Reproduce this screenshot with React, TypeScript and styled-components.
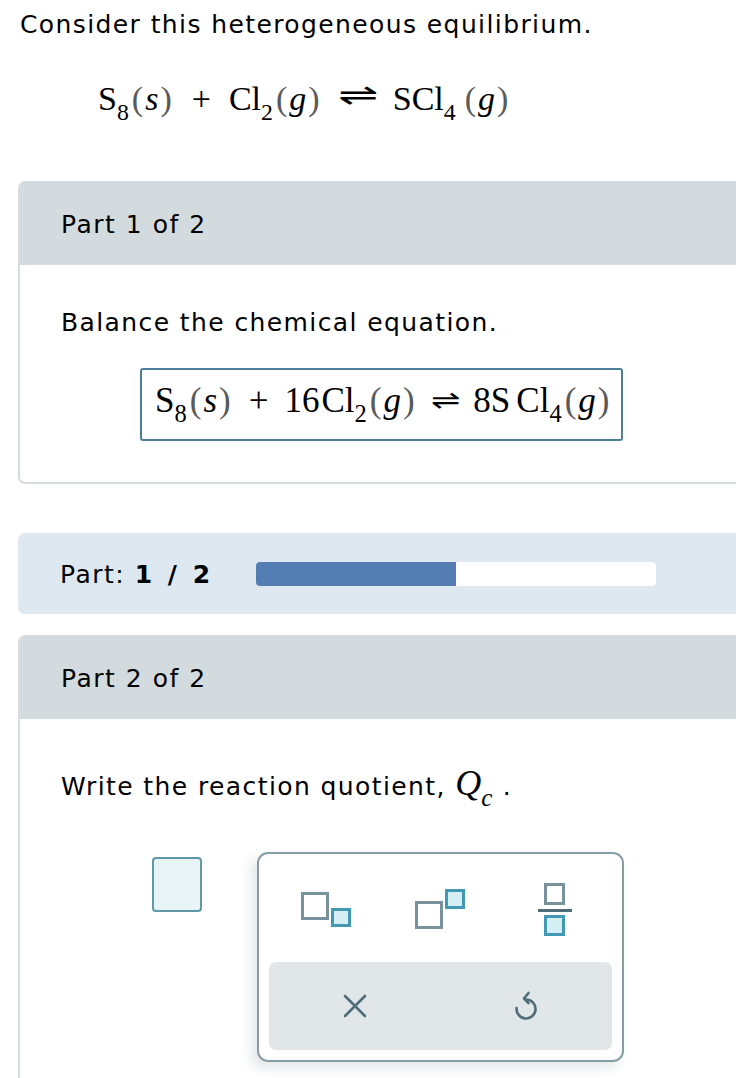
import React from "react"
import styled, { createGlobalStyle } from "styled-components"

const GlobalStyle = createGlobalStyle`
  html, body {
    margin: 0;
    padding: 0;
    background: #ffffff;
    overflow-x: hidden;
  }
  body {
    font-family: "DejaVu Sans", Verdana, sans-serif;
    color: #000;
  }
`

// page
const Page = styled.div`
  width: 736px;
  overflow: hidden;
  padding-top: 9px;
`
const Intro = styled.p`
  margin: 0 0 0 20px;
  font-size: 25px;
  line-height: 32px;
  letter-spacing: 1.4px;
`
const EqRow = styled.div`
  margin: 30px 0 0 98px;
  height: 56px;
  display: flex;
  align-items: center;
`

// equation pieces
const Chem = styled.span<{ $size?: number }>`
  font-family: "Liberation Serif", "Times New Roman", serif;
  font-size: ${p => p.$size ?? 34}px;
  line-height: 1;
  white-space: nowrap;
  display: inline-flex;
  align-items: baseline;
  letter-spacing: 0;
`
const Sub = styled.span`
  font-size: 0.7em;
  position: relative;
  top: 0.42em;
  margin-right: 1px;
`
const Paren = styled.span`
  color: #5a5a5a;
  padding: 0 2px;
`
const It = styled.i`
  font-style: italic;
`
const Gap = styled.span<{ $w: number }>`
  display: inline-block;
  width: ${p => p.$w}px;
`
const Op = styled.span<{ $gap: number }>`
  margin: 0 ${p => p.$gap}px;
`
const Arrow = styled.span<{ $wide?: boolean }>`
  font-family: "DejaVu Sans", sans-serif;
  font-size: ${p => (p.$wide ? 30 : 26)}px;
  display: inline-block;
  transform: scaleX(${p => (p.$wide ? 1.6 : 1.35)});
  margin: 0 ${p => (p.$wide ? 22 : 17)}px 0 ${p => (p.$wide ? 24 : 18)}px;
  position: relative;
  top: ${p => (p.$wide ? -5 : -3)}px;
`

// cards
const Card = styled.section<{ $open?: boolean }>`
  margin: 0 -20px 0 18px;
  border: 2px solid #d5dde1;
  border-right: none;
  border-top: none;
  border-bottom: ${p => (p.$open ? "none" : "2px solid #d5dde1")};
  border-radius: 7px 0 0 7px;
  overflow: hidden;
`
const CardHeader = styled.div`
  background: #d3dbdf;
  height: 84px;
  display: flex;
  align-items: center;
  font-size: 25px;
  letter-spacing: 1.5px;
  padding-top: 3px;
  box-sizing: border-box;
  margin-left: -2px;
  padding-left: 43px;
`
const CardBody = styled.div<{ $pad: number }>`
  padding: ${p => p.$pad}px 0 0 41px;
`
const Prompt = styled.p`
  margin: 0;
  font-size: 25px;
  letter-spacing: 1.4px;
  line-height: 32px;
  display: flex;
  align-items: baseline;
`
const AnswerBox = styled.div`
  margin: 29px 0 41px 79px;
  width: 483px;
  height: 73px;
  box-sizing: border-box;
  border: 2px solid #4c7f96;
  border-radius: 3px;
  display: flex;
  align-items: center;
  padding-left: 13px;
  padding-bottom: 8px;
`

// progress
const Progress = styled.div`
  margin: 49px -20px 21px 18px;
  height: 81px;
  background: #dde8f1;
  border-radius: 7px 0 0 7px;
  display: flex;
  align-items: center;
  padding-left: 42px;
  font-size: 25px;
  letter-spacing: 1.5px;
  gap: 42px;
`
const ProgressLabel = styled.span`
  padding-top: 1px;
  b {
    font-weight: 700;
    letter-spacing: 3.5px;
  }
`
const Track = styled.div`
  width: 400px;
  height: 24px;
  background: #ffffff;
  border-radius: 4px;
  overflow: hidden;
`
const Fill = styled.div`
  height: 100%;
  background: #537db3;
`

// answer area of part 2
const Workspace = styled.div`
  display: flex;
  align-items: flex-start;
  margin-top: 49px;
  padding-left: 91px;
  gap: 55px;
`
const SlotBox = styled.div`
  margin-top: 5px;
  width: 50px;
  height: 55px;
  box-sizing: border-box;
  border: 2px solid #5e98a9;
  border-radius: 4px;
  background: #e8f4f6;
`
const Palette = styled.div`
  width: 367px;
  height: 210px;
  box-sizing: border-box;
  border: 2px solid #889ea7;
  border-radius: 11px;
  background: #fff;
  box-shadow: -6px 6px 12px rgba(40, 60, 70, 0.12);
  padding: 0 10px 10px;
  display: flex;
  flex-direction: column;
`
const IconRow = styled.div`
  flex: 1;
  display: grid;
  grid-template-columns: repeat(3, 1fr);
  align-items: center;
  justify-items: center;
  padding-top: 2px;
`
const ActionRow = styled.div`
  height: 88px;
  background: #e1e6e9;
  border-radius: 7px;
  display: grid;
  grid-template-columns: repeat(2, 1fr);
  align-items: center;
  justify-items: center;
`
const IconButton = styled.button`
  border: none;
  background: transparent;
  padding: 0;
  display: flex;
  align-items: center;
  justify-content: center;
`

const GRAY = "#7a929b"
const TEAL = "#4299b3"
const TEAL_FILL = "#d5eef4"

const SubscriptIcon = () => (
  <svg width="50" height="35" viewBox="0 0 50 35">
    <rect x="1.5" y="1.5" width="25" height="25" fill="none" stroke={GRAY} strokeWidth="3" />
    <rect x="31.5" y="17.5" width="17" height="16" fill={TEAL_FILL} stroke={TEAL} strokeWidth="3" />
  </svg>
)
const SuperscriptIcon = () => (
  <svg width="50" height="40" viewBox="0 0 50 40">
    <rect x="1.5" y="13.5" width="25" height="25" fill="none" stroke={GRAY} strokeWidth="3" />
    <rect x="31.5" y="1.5" width="17" height="17" fill={TEAL_FILL} stroke={TEAL} strokeWidth="3" />
  </svg>
)
const FractionIcon = () => (
  <svg width="34" height="53" viewBox="0 0 34 53">
    <rect x="7.5" y="1.5" width="18" height="19" fill="none" stroke={GRAY} strokeWidth="3" />
    <rect x="0" y="26" width="34" height="3" fill="#4e6d78" />
    <rect x="7.5" y="33.5" width="18" height="18" fill={TEAL_FILL} stroke={TEAL} strokeWidth="3" />
  </svg>
)
const ClearIcon = () => (
  <svg width="26" height="26" viewBox="0 0 26 26">
    <path d="M3 3 L23 23 M23 3 L3 23" stroke="#4e6d78" strokeWidth="2.6" strokeLinecap="round" />
  </svg>
)
const UndoIcon = () => (
  <svg width="28" height="32" viewBox="0 0 28 32">
    <path
      d="M14 9.5 A9.5 9.5 0 1 1 4.6 18"
      fill="none"
      stroke="#4e6d78"
      strokeWidth="2.6"
      strokeLinecap="round"
    />
    <path
      d="M16.5 3 L12 8.5 L16.5 13"
      fill="none"
      stroke="#4e6d78"
      strokeWidth="2.6"
      strokeLinecap="round"
      strokeLinejoin="round"
    />
  </svg>
)

const State = ({ s }: { s: string }) => (
  <>
    <Paren>(</Paren>
    <It>{s}</It>
    <Paren>)</Paren>
  </>
)

export default function App() {
  return (
    <>
      <GlobalStyle />
      <Page>
        <Intro>Consider this heterogeneous equilibrium.</Intro>
        <EqRow>
          <Chem>
            S<Sub>8</Sub>
            <State s="s" />
            <Op $gap={18}>+</Op>
            Cl<Sub>2</Sub>
            <State s="g" />
            <Arrow $wide>⇌</Arrow>
            SCl<Sub>4</Sub>
            <Gap $w={6} />
            <State s="g" />
          </Chem>
        </EqRow>

        <Card style={{ marginTop: 54 }}>
          <CardHeader>Part 1 of 2</CardHeader>
          <CardBody $pad={42}>
            <Prompt>Balance the chemical equation.</Prompt>
            <AnswerBox>
              <Chem $size={35}>
                S<Sub>8</Sub>
                <State s="s" />
                <Op $gap={16}>+</Op>
                16<Gap $w={2} />Cl<Sub>2</Sub>
                <State s="g" />
                <Arrow>⇌</Arrow>
                8S<Gap $w={6} />Cl<Sub>4</Sub>
                <State s="g" />
              </Chem>
            </AnswerBox>
          </CardBody>
        </Card>

        <Progress>
          <ProgressLabel>
            Part: <b>1 / 2</b>
          </ProgressLabel>
          <Track>
            <Fill style={{ width: `${(1 / 2) * 100}%` }} />
          </Track>
        </Progress>

        <Card $open>
          <CardHeader>Part 2 of 2</CardHeader>
          <CardBody $pad={46}>
            <Prompt>
              Write the reaction quotient,&nbsp;
              <Chem $size={36}>
                <It>Q</It>
                <Sub>
                  <It>c</It>
                </Sub>
              </Chem>
              &nbsp;.
            </Prompt>
            <Workspace>
              <SlotBox />
              <Palette>
                <IconRow>
                  <IconButton><SubscriptIcon /></IconButton>
                  <IconButton><SuperscriptIcon /></IconButton>
                  <IconButton><FractionIcon /></IconButton>
                </IconRow>
                <ActionRow>
                  <IconButton><ClearIcon /></IconButton>
                  <IconButton><UndoIcon /></IconButton>
                </ActionRow>
              </Palette>
            </Workspace>
            <div style={{ height: 60 }} />
          </CardBody>
        </Card>
      </Page>
    </>
  )
}
